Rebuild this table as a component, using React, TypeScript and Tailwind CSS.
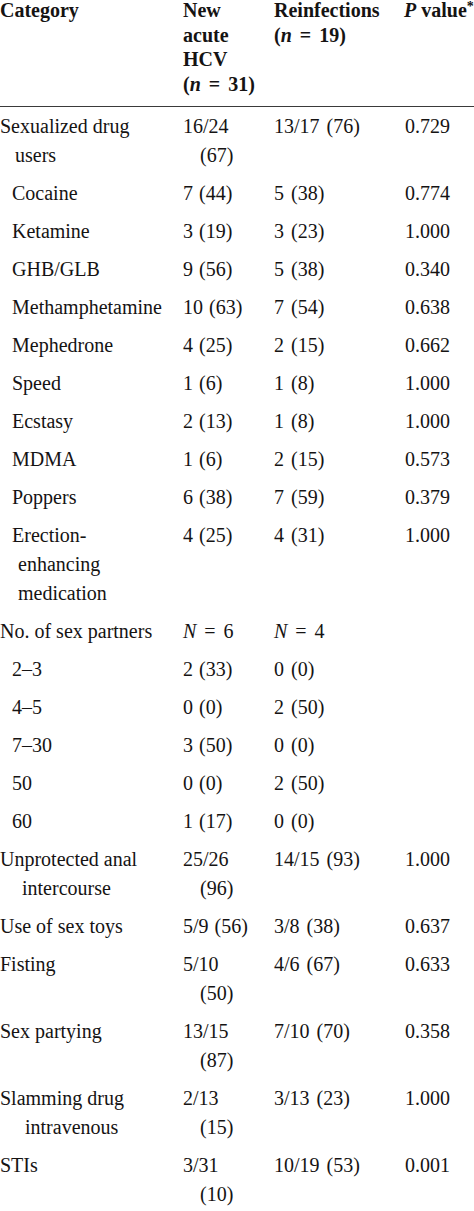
import React from "react";

type Row = {
  c1: string[];
  i1?: number; // indent of first line
  i1b?: number; // indent of continuation lines
  c2: React.ReactNode[];
  c3: React.ReactNode;
  c4?: string;
};

const rows: Row[] = [
  { c1: ["Sexualized drug", "users"], i1: 0, i1b: 15, c2: ["16/24", "(67)"], c3: "13/17 (76)", c4: "0.729" },
  { c1: ["Cocaine"], i1: 12, c2: ["7 (44)"], c3: "5 (38)", c4: "0.774" },
  { c1: ["Ketamine"], i1: 12, c2: ["3 (19)"], c3: "3 (23)", c4: "1.000" },
  { c1: ["GHB/GLB"], i1: 12, c2: ["9 (56)"], c3: "5 (38)", c4: "0.340" },
  { c1: ["Methamphetamine"], i1: 12, c2: ["10 (63)"], c3: "7 (54)", c4: "0.638" },
  { c1: ["Mephedrone"], i1: 12, c2: ["4 (25)"], c3: "2 (15)", c4: "0.662" },
  { c1: ["Speed"], i1: 12, c2: ["1 (6)"], c3: "1 (8)", c4: "1.000" },
  { c1: ["Ecstasy"], i1: 12, c2: ["2 (13)"], c3: "1 (8)", c4: "1.000" },
  { c1: ["MDMA"], i1: 12, c2: ["1 (6)"], c3: "2 (15)", c4: "0.573" },
  { c1: ["Poppers"], i1: 12, c2: ["6 (38)"], c3: "7 (59)", c4: "0.379" },
  { c1: ["Erection-", "enhancing", "medication"], i1: 12, i1b: 18, c2: ["4 (25)"], c3: "4 (31)", c4: "1.000" },
  {
    c1: ["No. of sex partners"],
    i1: 0,
    c2: [
      <span key="n" className="[word-spacing:3px]">
        <i>N</i> = 6
      </span>,
    ],
    c3: (
      <span className="[word-spacing:3px]">
        <i>N</i> = 4
      </span>
    ),
  },
  { c1: ["2–3"], i1: 12, c2: ["2 (33)"], c3: "0 (0)" },
  { c1: ["4–5"], i1: 12, c2: ["0 (0)"], c3: "2 (50)" },
  { c1: ["7–30"], i1: 12, c2: ["3 (50)"], c3: "0 (0)" },
  { c1: ["50"], i1: 12, c2: ["0 (0)"], c3: "2 (50)" },
  { c1: ["60"], i1: 12, c2: ["1 (17)"], c3: "0 (0)" },
  { c1: ["Unprotected anal", "intercourse"], i1: 0, i1b: 22, c2: ["25/26", "(96)"], c3: "14/15 (93)", c4: "1.000" },
  { c1: ["Use of sex toys"], i1: 0, c2: ["5/9 (56)"], c3: "3/8 (38)", c4: "0.637" },
  { c1: ["Fisting"], i1: 0, c2: ["5/10", "(50)"], c3: "4/6 (67)", c4: "0.633" },
  { c1: ["Sex partying"], i1: 0, c2: ["13/15", "(87)"], c3: "7/10 (70)", c4: "0.358" },
  { c1: ["Slamming drug", "intravenous"], i1: 0, i1b: 25, c2: ["2/13", "(15)"], c3: "3/13 (23)", c4: "1.000" },
  { c1: ["STIs"], i1: 0, c2: ["3/31", "(10)"], c3: "10/19 (53)", c4: "0.001" },
];

export default function App() {
  return (
    <div
      className="w-[474px] h-[1211px] overflow-hidden bg-white text-[#151313] text-[20px]"
      style={{ fontFamily: '"Liberation Serif", "Times New Roman", serif' }}
    >
      {/* Header */}
      <div className="grid grid-cols-[183px_91px_130px_70px] mt-[-2px] pb-[10px] font-bold leading-[24.5px] whitespace-nowrap">
        <div>Category</div>
        <div className="flex flex-col">
          <span>New</span>
          <span>acute</span>
          <span>HCV</span>
          <span className="[word-spacing:3px]">
            (<i>n</i> = 31)
          </span>
        </div>
        <div className="flex flex-col">
          <span>Reinfections</span>
          <span className="[word-spacing:3px]">
            (<i>n</i> = 19)
          </span>
        </div>
        <div>
          <i>P</i> value<span className="text-[14px] relative top-[-6px]">*</span>
        </div>
      </div>
      <div className="h-[1.4px] bg-[#3a3a3a]" />

      {/* Body */}
      <div className="flex flex-col">
        {rows.map((r, idx) => (
          <div
            key={idx}
            className="grid grid-cols-[183px_91px_130px_70px] pt-[5px] pb-[4px] leading-[29px] whitespace-nowrap"
          >
            <div className="flex flex-col">
              {r.c1.map((t, i) => (
                <span key={i} style={{ paddingLeft: i === 0 ? r.i1 ?? 0 : r.i1b ?? 0 }}>
                  {t}
                </span>
              ))}
            </div>
            <div className="flex flex-col [word-spacing:1px]">
              {r.c2.map((t, i) => (
                <span key={i} className={i === 0 ? "" : "pl-[17px]"}>
                  {t}
                </span>
              ))}
            </div>
            <div className="[word-spacing:2px]">{r.c3}</div>
            <div className="pl-[1px]">{r.c4 ?? ""}</div>
          </div>
        ))}
      </div>
    </div>
  );
}
